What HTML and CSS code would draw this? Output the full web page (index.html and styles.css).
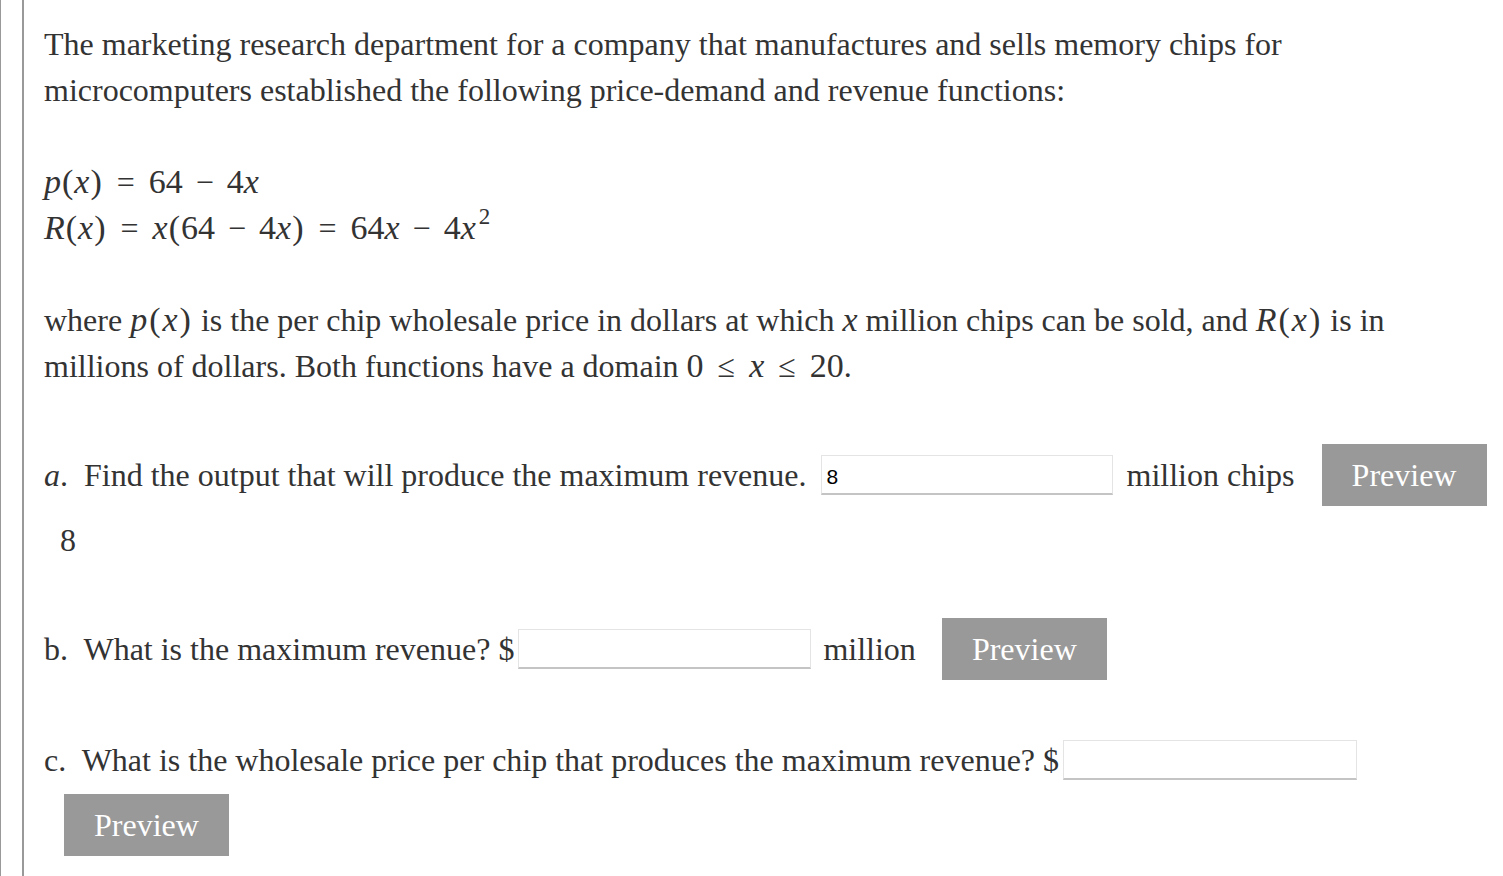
FILE: index.html
```html
<!DOCTYPE html>
<html>
<head>
<meta charset="utf-8">
<link rel="stylesheet" href="styles.css">
</head>
<body>
<div class="main">
  <p class="intro">The marketing research department for a company that manufactures and sells memory chips for microcomputers established the following price-demand and revenue functions:</p>

  <div class="math-block">
    <div class="mline"><span class="mi">p</span><span class="mo">(</span><span class="mi">x</span><span class="mo">)</span><span class="rel">=</span><span class="mn">64</span><span class="bin">−</span><span class="mn">4</span><span class="mi">x</span></div>
    <div class="mline"><span class="mi">R</span><span class="mo">(</span><span class="mi">x</span><span class="mo">)</span><span class="rel">=</span><span class="mi">x</span><span class="mo">(</span><span class="mn">64</span><span class="bin">−</span><span class="mn">4</span><span class="mi">x</span><span class="mo">)</span><span class="rel">=</span><span class="mn">64</span><span class="mi">x</span><span class="bin">−</span><span class="mn">4</span><span class="mi">x</span><sup class="sup">2</sup></div>
  </div>

  <p class="para">where <span class="mi">p</span><span class="mo">(</span><span class="mi">x</span><span class="mo">)</span> is the per chip wholesale price in dollars at which <span class="mi">x</span> million chips can be sold, and <span class="mi">R</span><span class="mo">(</span><span class="mi">x</span><span class="mo">)</span> is in millions of dollars. Both functions have a domain <span class="mn">0</span><span class="rel">≤</span><span class="mi">x</span><span class="rel">≤</span><span class="mn">20</span>.</p>

  <div class="row row-a">
    <span class="q"><span class="mi">a</span>.&nbsp; Find the output that will produce the maximum revenue.</span>
    <span class="field field-a">8</span>
    <span class="unit">million chips</span>
    <span class="btn btn-a">Preview</span>
  </div>

  <div class="answer">8</div>

  <div class="row row-b">
    <span class="q">b.&nbsp; What is the maximum revenue? $</span>
    <span class="field field-b"></span>
    <span class="unit unit-b">million</span>
    <span class="btn btn-b">Preview</span>
  </div>

  <div class="row row-c">
    <span class="q">c.&nbsp; What is the wholesale price per chip that produces the maximum revenue? $</span>
    <span class="field field-c"></span>
  </div>

  <div class="row row-d">
    <span class="btn">Preview</span>
  </div>
</div>
</body>
</html>
```

FILE: styles.css
```css
html, body {
  margin: 0;
  padding: 0;
  background: #fff;
}
body {
  border-left: 1px solid #999;
  min-height: 876px;
  box-sizing: border-box;
  font-family: "Liberation Serif", "Times New Roman", serif;
  font-size: 32px;
  color: #333;
}
.main {
  margin-left: 21px;
  border-left: 2px solid #999;
  padding: 21px 0 0 20px;
  min-height: 855px;
}
p { margin: 0; }
.intro, .para { line-height: 46px; padding-right: 100px; }
.math-block { margin-top: 46px; line-height: 46px; }
.math-block .mi, .math-block .mn, .math-block .mo { font-size: 34px; }
.para .mi, .para .mo, .para .mn { font-size: 34px; }
.para { margin-top: 46px; }
.mi { font-style: italic; }
.mo, .mn { font-style: normal; }
.mo { margin: 0 1px; }
.para .mo { margin: 0 2px; }
.rel { margin: 0 14px; }
.bin { margin: 0 13px; }
.para .rel { margin: 0 14px; }
.sup { font-size: 23px; vertical-align: 15px; line-height: 0; margin-left: 3px; }
.row {
  display: flex;
  align-items: center;
}
.row-a { margin-top: 55px; height: 62px; }
.row-b { margin-top: 55px; height: 62px; }
.row-c { margin-top: 57px; height: 46px; }
.row-d { margin-top: 11px; }
.answer {
  margin-top: 11px;
  line-height: 46px;
  padding-left: 16px;
}
.field {
  display: inline-block;
  height: 40px;
  box-sizing: border-box;
  border: 1px solid #e4e4e4;
  border-bottom: 2px solid #c4c4c4;
  background: #fff;
  font-family: "Liberation Sans", Arial, sans-serif;
  font-size: 21px;
  color: #000;
  line-height: 42px;
  padding-left: 5px;
}
.field-a { width: 292px; margin-left: 14px; }
.field-b { width: 293px; margin-left: 4px; }
.field-c { width: 294px; margin-left: 4px; }
.unit { margin-left: 14px; }
.unit-b { margin-left: 12px; }
.btn {
  display: inline-flex;
  align-items: center;
  justify-content: center;
  width: 165px;
  height: 62px;
  background: #999;
  color: #fff;
  font-size: 32px;
}
.btn-a { margin-left: 27px; }
.btn-b { margin-left: 26px; }
.row-d .btn { margin-left: 20px; }
```
